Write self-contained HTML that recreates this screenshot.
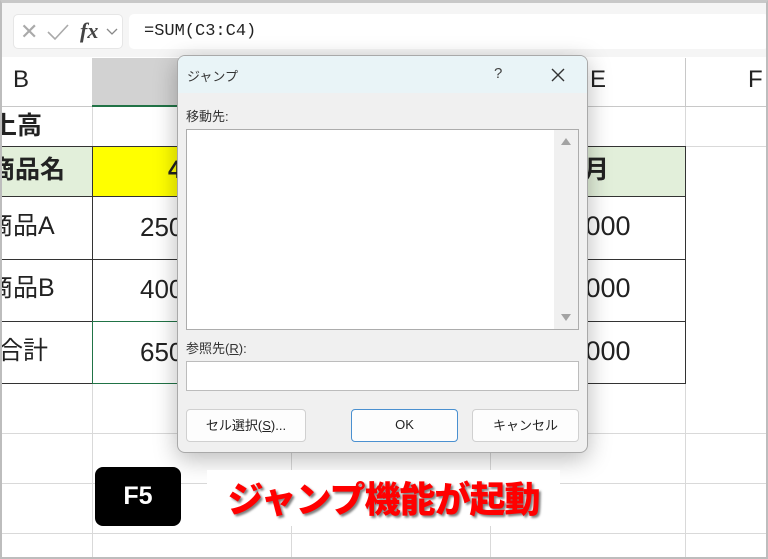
<!DOCTYPE html>
<html><head><meta charset="utf-8"><style>
*{box-sizing:border-box;margin:0;padding:0}
body{width:768px;height:559px;overflow:hidden;background:#fff;position:relative;font-family:"Liberation Sans","Noto Sans CJK JP",sans-serif;color:#222}
.a{position:absolute}
.vl{position:absolute;width:1px;background:#d9d9d9}
.hl{position:absolute;height:1px;background:#d9d9d9}
.t{position:absolute;font-size:25px;white-space:nowrap;line-height:1}
</style></head><body>
<div class="a" style="left:0;top:0;width:768px;height:559px;border:2px solid #bdbdbd;border-top:3px solid #c8c8c8;z-index:50;pointer-events:none"></div>
<div class="a" style="left:0;top:0;width:768px;height:57px;background:#f5f5f5"></div>
<div class="a" style="left:13px;top:14px;width:110px;height:35px;background:#fff;border-radius:5px;border:1px solid #e6e6e6"></div>
<div class="a" style="left:20px;top:19px;font-size:22px;color:#aaa">✕</div>
<svg class="a" style="left:46px;top:22px" width="24" height="20"><path d="M2 10 L9 17 L22 3" stroke="#aaa" stroke-width="1.6" fill="none"/></svg>
<div class="a" style="left:80px;top:18px;font-family:'Liberation Serif',serif;font-style:italic;font-size:22px;color:#444;font-weight:bold">fx</div>
<svg class="a" style="left:106px;top:27px" width="14" height="10"><path d="M1 2 L6 7 L11 2" stroke="#888" stroke-width="1.3" fill="none"/></svg>
<div class="a" style="left:129px;top:14px;width:640px;height:35px;background:#fff;border-radius:5px"></div>
<div class="a" style="left:144px;top:22px;font-family:'Liberation Mono',monospace;font-size:17px;color:#222">=SUM(C3:C4)</div>
<div class="a" style="left:0;top:58px;width:768px;height:49px;background:#fff;border-bottom:1px solid #c8c8c8"></div>
<div class="a" style="left:92px;top:58px;width:200px;height:49px;background:#d2d2d2;border-bottom:2px solid #217346"></div>
<div class="a" style="left:13px;top:66px;font-size:24px">B</div>
<div class="a" style="left:590px;top:66px;font-size:24px">E</div>
<div class="a" style="left:748px;top:66px;font-size:24px">F</div>
<div class="vl" style="left:685px;top:58px;height:49px;background:#c8c8c8"></div>
<div class="vl" style="left:92px;top:107px;height:452px"></div>
<div class="vl" style="left:291px;top:107px;height:452px"></div>
<div class="vl" style="left:490px;top:107px;height:452px"></div>
<div class="vl" style="left:685px;top:107px;height:452px"></div>
<div class="hl" style="left:0;top:146px;width:768px"></div>
<div class="hl" style="left:0;top:433px;width:768px"></div>
<div class="hl" style="left:0;top:483px;width:768px"></div>
<div class="hl" style="left:0;top:533px;width:768px"></div>
<div class="t" style="left:-33px;top:114px;font-weight:bold">売上高</div>
<div class="a" style="left:0;top:146px;width:92px;height:50px;background:#e2efda"></div>
<div class="a" style="left:92px;top:146px;width:200px;height:50px;background:#ffff00"></div>
<div class="a" style="left:490px;top:146px;width:195px;height:50px;background:#e2efda"></div>
<div class="a" style="left:0;top:146px;width:686px;height:238px;border:1px solid #333;border-left:none"></div>
<div class="hl" style="left:0;top:196px;width:686px;background:#333"></div>
<div class="hl" style="left:0;top:259px;width:686px;background:#333"></div>
<div class="hl" style="left:0;top:321px;width:686px;background:#333"></div>
<div class="vl" style="left:92px;top:146px;height:238px;background:#333"></div>
<div class="a" style="left:92px;top:321px;width:200px;height:63px;border:1.5px solid #217346"></div>
<div class="t" style="left:-10px;top:158px;font-weight:bold">商品名</div>
<div class="t" style="left:168px;top:158px;font-weight:bold">4</div>
<div class="t" style="left:584px;top:158px;font-weight:bold">月</div>
<div class="t" style="left:-12px;top:214px">商品A</div>
<div class="t" style="left:-12px;top:276px">商品B</div>
<div class="t" style="left:-2px;top:339px">合計</div>
<div class="t" style="left:140px;top:214px;font-size:26px">250</div>
<div class="t" style="left:140px;top:276px;font-size:26px">400</div>
<div class="t" style="left:140px;top:339px;font-size:26px">650</div>
<div class="t" style="left:578px;top:213px;font-size:27px">,000</div>
<div class="t" style="left:578px;top:275px;font-size:27px">,000</div>
<div class="t" style="left:578px;top:338px;font-size:27px">,000</div>
<div class="a" style="left:177px;top:55px;width:411px;height:398px;background:#f0f0f0;border:1px solid #a9a9a9;border-radius:8px;box-shadow:0 6px 24px rgba(0,0,0,.28);overflow:hidden">
 <div class="a" style="left:0;top:0;width:411px;height:37px;background:#e9f4f7"></div>
 <div class="a" style="left:9px;top:10px;font-size:13px;color:#333">ジャンプ</div>
 <div class="a" style="left:316px;top:9px;font-size:15px;color:#444">?</div>
 <svg class="a" style="left:372px;top:11px" width="16" height="16"><path d="M2 2 L14 14 M14 2 L2 14" stroke="#333" stroke-width="1.4"/></svg>
 <div class="a" style="left:8px;top:50px;font-size:13px;color:#333">移動先:</div>
 <div class="a" style="left:8px;top:73px;width:393px;height:201px;background:#fff;border:1px solid #acacac"></div>
 <div class="a" style="left:376px;top:74px;width:24px;height:199px;background:#f0f0f0"></div>
 <div class="a" style="left:383px;top:82px;width:0;height:0;border-left:5px solid transparent;border-right:5px solid transparent;border-bottom:7px solid #a3a3a3"></div>
 <div class="a" style="left:383px;top:258px;width:0;height:0;border-left:5px solid transparent;border-right:5px solid transparent;border-top:7px solid #a3a3a3"></div>
 <div class="a" style="left:8px;top:282px;font-size:13px;color:#333">参照先(<u>R</u>):</div>
 <div class="a" style="left:8px;top:305px;width:393px;height:30px;background:#fff;border:1px solid #bcbcbc"></div>
 <div class="a" style="left:8px;top:353px;width:120px;height:33px;background:#fdfdfd;border:1px solid #d0d0d0;border-radius:4px;font-size:13px;text-align:center;line-height:31px;color:#222">セル選択(<u>S</u>)...</div>
 <div class="a" style="left:173px;top:353px;width:107px;height:33px;background:#fdfdfd;border:1.5px solid #4a90d0;border-radius:4px;font-size:13px;text-align:center;line-height:30px;color:#222">OK</div>
 <div class="a" style="left:294px;top:353px;width:107px;height:33px;background:#fdfdfd;border:1px solid #d0d0d0;border-radius:4px;font-size:13px;text-align:center;line-height:31px;color:#222">キャンセル</div>
</div>
<div class="a" style="left:95px;top:467px;width:86px;height:59px;background:#000;border-radius:8px;color:#fff;font-size:25px;font-weight:bold;text-align:center;line-height:59px">F5</div>
<div class="a" style="left:207px;top:470px;width:353px;height:56px;background:#fff;color:#f00;font-size:36px;font-weight:900;line-height:54px;text-align:center;letter-spacing:-1px;text-shadow:2px 2px 2px rgba(0,0,0,.5);font-family:'Noto Sans CJK JP',sans-serif">ジャンプ機能が起動</div>
</body></html>
